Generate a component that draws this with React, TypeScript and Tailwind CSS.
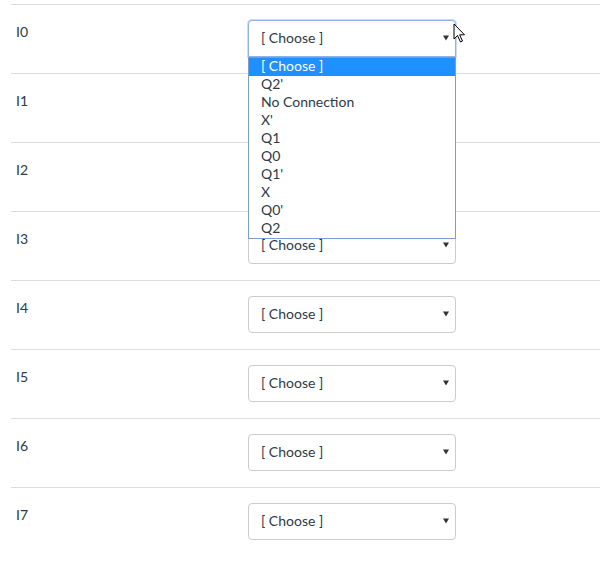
import React from "react";

const rows = ["I0", "I1", "I2", "I3", "I4", "I5", "I6", "I7"];

const options = [
  "[ Choose ]",
  "Q2'",
  "No Connection",
  "X'",
  "Q1",
  "Q0",
  "Q1'",
  "X",
  "Q0'",
  "Q2",
];

function Caret() {
  return (
    <svg width="6" height="6" viewBox="0 0 6 6" className="shrink-0">
      <path d="M0 0.5 H6 L3 5.5 Z" fill="#333" />
    </svg>
  );
}

function Cursor() {
  return (
    <svg
      width="14"
      height="21"
      viewBox="0 0 14 21"
      className="absolute left-[205px] top-[3px] z-20"
    >
      <path
        d="M1 1 L1 16 L4.5 12.5 L7.5 19 L9.5 18 L6.6 11.8 L11.5 11.8 Z"
        fill="#fff"
        stroke="#000"
        strokeWidth="1"
        strokeLinejoin="round"
      />
    </svg>
  );
}

function FakeSelect({ open }: { open?: boolean }) {
  return (
    <div className="relative w-[208px]">
      <div
        className={
          open
            ? "flex h-[37px] items-center justify-between rounded-t-[4px] border border-[#8fb1ea] bg-white pb-[2px] pl-[12px] pr-[6px] shadow-[0_0_0_1px_#c9dbf6]"
            : "flex h-[37px] items-center justify-between rounded-[4px] border border-[#c7cdd1] bg-white pb-[2px] pl-[12px] pr-[6px]"
        }
      >
        <span className="text-[14px] leading-[20px] text-[#2d3b45]">[ Choose ]</span>
        <Caret />
      </div>
      {open && (
        <>
          <ul className="absolute left-0 top-[37px] z-10 w-[208px] border border-[#7a9cd3] bg-white">
            {options.map((o, i) => (
              <li
                key={o}
                className={
                  i === 0
                    ? "h-[18px] bg-[#1e90ff] pl-[12px] text-[14px] leading-[16px] text-white"
                    : "h-[18px] pl-[12px] text-[14px] leading-[16px] text-[#2d3b45]"
                }
              >
                {o}
              </li>
            ))}
          </ul>
          <Cursor />
        </>
      )}
    </div>
  );
}

export default function App() {
  return (
    <div
      className="h-[565px] w-[616px] bg-white pt-[4px]"
      style={{ fontFamily: "Lato, 'Liberation Sans', sans-serif" }}
    >
      <div className="ml-[11px] w-[589px]">
        {rows.map((r, i) => (
          <div
            key={r}
            className="grid h-[69px] grid-cols-[237px_208px] border-t border-[#dddddd]"
          >
            <div className="pl-[5px] pt-[17px] text-[14px] leading-[20px] text-[#2d3b45]">
              {r}
            </div>
            <div className="pt-[15px]">
              <FakeSelect open={i === 0} />
            </div>
          </div>
        ))}
      </div>
    </div>
  );
}
